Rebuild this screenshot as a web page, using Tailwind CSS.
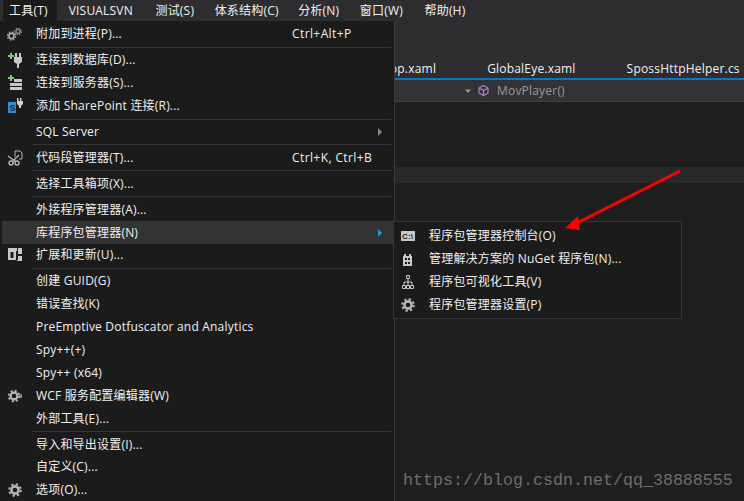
<!DOCTYPE html>
<html lang="en">
<head>
  <meta charset="UTF-8">
  <title>Visual Studio - Tools menu</title>
  <script src="https://cdn.jsdelivr.net/npm/@tailwindcss/browser@4"></script>
</head>
<body class="bg-[#1e1e1e]">
<div class="relative w-[744px] h-[501px] overflow-hidden flex flex-col bg-[#1e1e1e] text-[#f1f1f1] text-[12px] tracking-[0.2px] font-['Open_Sans','Noto_Sans_CJK_SC',sans-serif]">

  <!-- Menu bar -->
  <div class="h-[78px] shrink-0 bg-[#2d2d30]">
    <nav class="h-[21px] flex items-center pl-[9px] gap-[20.5px]">
      <span>工具(T)</span>
      <span class="ml-[0.5px]">VISUALSVN</span>
      <span class="ml-[2px]">测试(S)</span>
      <span>体系结构(C)</span>
      <span class="ml-[-1px]">分析(N)</span>
      <span>窗口(W)</span>
      <span class="ml-[1px]">帮助(H)</span>
    </nav>
    <!-- Tabs -->
    <div class="h-[18px] mt-[39px] pl-[382px] flex items-center whitespace-nowrap text-[#f1f1f1]">
      <span>App.xaml</span>
      <span class="ml-[51px]">GlobalEye.xaml</span>
      <span class="ml-[51px]">SpossHttpHelper.cs</span>
    </div>
  </div>
  <div class="h-[2px] shrink-0 bg-[#007acc]"></div>

  <!-- Navigation bar -->
  <div class="h-[22px] shrink-0 flex items-center bg-[#333337] border-b border-[#3f3f46] pl-[464px] text-[#999999]">
    <svg class="w-[8px] h-[8px]" viewBox="0 0 8 8"><path d="M1 2.500h6L4 6z" fill="#999"/></svg>
    <div class="w-px h-full bg-[#2d2d30] ml-[3px]"></div>
    <svg class="w-[13px] h-[13px] ml-[1px]" viewBox="0 0 13 13" fill="none" stroke="#b180d7" stroke-width="1.1"><path d="M6.500 1.500l4.500 2.500v5l-4.500 2.500L2 9V4zM2 4l4.500 2.500L11 4M6.500 6.500v5"/></svg>
    <span class="ml-[7px]">MovPlayer()</span>
  </div>

  <!-- Editor -->
  <div class="flex-1 pt-[65px]">
    <div class="h-[16px] bg-[#282828]"></div>
  </div>

  <!-- Active menu title -->
  <div class="absolute left-[3px] top-0 w-[54px] h-[21px] bg-[#1b1b1c] pl-[6px] flex items-center">工具(T)</div>

  <!-- Tools menu -->
  <div class="absolute left-0 top-[21px] w-[395px] h-[480px] bg-[#1b1b1c] border-r border-[#3a3a3e] pt-[2px]">
    <div class="flex items-center h-[22.9px]">
      <svg class="w-[36px] h-[16px] shrink-0" viewBox="0 0 36 16" fill="none" stroke="#a9a9a9"><g transform="translate(11.500,10)"><circle r="2.600" stroke-width="1.600"/><circle r="4" stroke-width="1.400" stroke-dasharray="1.570"/></g><g transform="translate(18,5.500)"><circle r="2" stroke-width="1.200"/><circle r="3.300" stroke-width="1.100" stroke-dasharray="1.300"/></g></svg>
      <span class="flex-1">附加到进程(P)...</span><span class="w-[102px] tracking-[0.4px]">Ctrl+Alt+P</span>
    </div>
    <div class="h-[3px] flex items-center pl-[32px] pr-[3px]"><div class="h-px w-full bg-[#333337]"></div></div>
    <div class="flex items-center h-[22.9px]">
      <svg class="w-[36px] h-[18px] shrink-0" viewBox="0 0 36 18"><path d="M8 4h2V2h2v2h2v2h-2v2h-2V6H8z" fill="#7fc77f"/><path d="M15 2h2v4h2V2h2v4h1v5l-3 2v4h-2v-4l-3-2V6h1z" fill="#c8c8c8"/></svg>
      <span>连接到数据库(D)...</span>
    </div>
    <div class="flex items-center h-[22.9px]">
      <svg class="w-[36px] h-[18px] shrink-0" viewBox="0 0 36 18"><path d="M8 3h2V1h2v2h2v2h-2v2h-2V5H8z" fill="#7fc77f"/><path d="M14 5h8v3h-8zM10 9h12v3H10zM10 13h12v3H10z" fill="#c8c8c8"/></svg>
      <span>连接到服务器(S)...</span>
    </div>
    <div class="flex items-center h-[22.9px]">
      <svg class="w-[36px] h-[18px] shrink-0" viewBox="0 0 36 18"><rect x="8" y="5" width="8" height="11" fill="#2f8fd0"/><text x="9.600" y="14" font-size="9" font-weight="700" fill="#10293d" font-family="Liberation Sans">S</text><path d="M17 1h1.500v3h1.500V1h1.500v3H23v3l-2 2v2h-2V9l-2-2z" fill="#d0d0d0"/></svg>
      <span>添加 SharePoint 连接(R)...</span>
    </div>
    <div class="h-[3px] flex items-center pl-[32px] pr-[3px]"><div class="h-px w-full bg-[#333337]"></div></div>
    <div class="flex items-center h-[22.9px]">
      <span class="w-[36px] shrink-0"></span><span class="flex-1">SQL Server</span>
      <svg class="w-[6px] h-[8px] mr-[11px]" viewBox="0 0 6 8"><path d="M1 0l4 4-4 4z" fill="#8a8a8a"/></svg>
    </div>
    <div class="h-[3px] flex items-center pl-[32px] pr-[3px]"><div class="h-px w-full bg-[#333337]"></div></div>
    <div class="flex items-center h-[22.9px]">
      <svg class="w-[36px] h-[18px] shrink-0" viewBox="0 0 36 18" fill="none" stroke="#b5b5b5"><path d="M15 8V2h5l2 2v6h-3" stroke-width="1"/><circle cx="11" cy="14" r="2" stroke-width="1.400"/><circle cx="17" cy="14" r="2" stroke-width="1.400"/><path d="M12.500 12.500L19 6M15.500 12.500L8 7" stroke-width="1.400"/></svg>
      <span class="flex-1">代码段管理器(T)...</span><span class="w-[102px] tracking-[0.4px]">Ctrl+K, Ctrl+B</span>
    </div>
    <div class="h-[3px] flex items-center pl-[32px] pr-[3px]"><div class="h-px w-full bg-[#333337]"></div></div>
    <div class="flex items-center h-[22.9px]"><span class="w-[36px] shrink-0"></span><span>选择工具箱项(X)...</span></div>
    <div class="h-[3px] flex items-center pl-[32px] pr-[3px]"><div class="h-px w-full bg-[#333337]"></div></div>
    <div class="flex items-center h-[22.9px]"><span class="w-[36px] shrink-0"></span><span>外接程序管理器(A)...</span></div>
    <div class="flex items-center h-[22.9px] ml-[2px] bg-[#333334]">
      <span class="w-[34px] shrink-0"></span><span class="flex-1">库程序包管理器(N)</span>
      <svg class="w-[6px] h-[8px] mr-[11px]" viewBox="0 0 6 8"><path d="M1 0l4 4-4 4z" fill="#1c97ea"/></svg>
    </div>
    <div class="flex items-center h-[22.9px]">
      <svg class="w-[36px] h-[16px] shrink-0" viewBox="0 0 36 16"><path d="M8 1h9v3h-1v9h-8zM18 1h4v6h-4zM18 9h4v5h-5v-1h1z" fill="#c8c8c8"/><path d="M10.500 5h3v6h-3z" fill="#1b1b1c"/></svg>
      <span>扩展和更新(U)...</span>
    </div>
    <div class="h-[3px] flex items-center pl-[32px] pr-[3px]"><div class="h-px w-full bg-[#333337]"></div></div>
    <div class="flex items-center h-[22.9px]"><span class="w-[36px] shrink-0"></span><span>创建 GUID(G)</span></div>
    <div class="flex items-center h-[22.9px]"><span class="w-[36px] shrink-0"></span><span>错误查找(K)</span></div>
    <div class="flex items-center h-[22.9px]"><span class="w-[36px] shrink-0"></span><span>PreEmptive Dotfuscator and Analytics</span></div>
    <div class="flex items-center h-[22.9px]"><span class="w-[36px] shrink-0"></span><span>Spy++(+)</span></div>
    <div class="flex items-center h-[22.9px]"><span class="w-[36px] shrink-0"></span><span>Spy++ (x64)</span></div>
    <div class="flex items-center h-[22.9px]">
      <svg class="w-[36px] h-[16px] shrink-0" viewBox="0 0 36 16" fill="none" stroke="#b5b5b5"><g transform="translate(14,8)"><circle r="3.400" stroke-width="2.200"/><circle r="5.300" stroke-width="1.800" stroke-dasharray="2.080"/></g><path d="M19 8h3M21 6v4" stroke-width="1.200"/></svg>
      <span>WCF 服务配置编辑器(W)</span>
    </div>
    <div class="flex items-center h-[22.9px]"><span class="w-[36px] shrink-0"></span><span>外部工具(E)...</span></div>
    <div class="h-[3px] flex items-center pl-[32px] pr-[3px]"><div class="h-px w-full bg-[#333337]"></div></div>
    <div class="flex items-center h-[22.9px]"><span class="w-[36px] shrink-0"></span><span>导入和导出设置(I)...</span></div>
    <div class="flex items-center h-[22.9px]"><span class="w-[36px] shrink-0"></span><span>自定义(C)...</span></div>
    <div class="flex items-center h-[22.9px]">
      <svg class="w-[36px] h-[16px] shrink-0" viewBox="0 0 36 16" fill="none" stroke="#b5b5b5"><g transform="translate(15,8)"><circle r="3.600" stroke-width="2.600"/><circle r="5.800" stroke-width="2" stroke-dasharray="2.280"/></g></svg>
      <span>选项(O)...</span>
    </div>
  </div>

  <!-- Package manager submenu -->
  <div class="absolute left-[393px] top-[221px] w-[289px] h-[98px] bg-[#1b1b1c] border border-[#333337] pt-[2px]">
    <div class="flex items-center h-[23px]">
      <svg class="w-[35px] h-[14px] shrink-0" viewBox="0 0 35 14"><rect x="7" y="2" width="14" height="10" fill="#c8c8c8"/><text x="8" y="10" font-size="8" font-weight="700" fill="#1b1b1c" font-family="Liberation Sans">C:\</text></svg>
      <span>程序包管理器控制台(O)</span>
    </div>
    <div class="flex items-center h-[23px]">
      <svg class="w-[35px] h-[16px] shrink-0" viewBox="0 0 35 16"><path d="M10 3h2v2h3V3h2v2h1v10H9V5h1z" fill="#c8c8c8"/><path d="M11 7h2v2h-2zM14 7h2v2h-2zM11 11h2v2h-2zM14 11h2v2h-2z" fill="#1b1b1c"/></svg>
      <span>管理解决方案的 NuGet 程序包(N)...</span>
    </div>
    <div class="flex items-center h-[23px]">
      <svg class="w-[35px] h-[16px] shrink-0" viewBox="0 0 35 16" fill="none" stroke="#c8c8c8"><path d="M12.500 1.500h3v3h-3zM8.500 11.500h3v3h-3zM12.500 11.500h3v3h-3zM16.500 11.500h3v3h-3zM14 4.500v7M10 11.500V8h8v3.500"/></svg>
      <span>程序包可视化工具(V)</span>
    </div>
    <div class="flex items-center h-[23px]">
      <svg class="w-[35px] h-[16px] shrink-0" viewBox="0 0 35 16" fill="none" stroke="#b5b5b5"><g transform="translate(14,8)"><circle r="3.600" stroke-width="2.600"/><circle r="5.800" stroke-width="2" stroke-dasharray="2.280"/></g></svg>
      <span>程序包管理器设置(P)</span>
    </div>
  </div>

  <!-- Red annotation arrow -->
  <svg class="absolute left-[560px] top-[165px] w-[124px] h-[70px]" viewBox="0 0 124 70"><path d="M120 6L17 58" stroke="#ff0000" stroke-width="3" fill="none"/><path d="M5 63L18 51l2 14z" fill="#ff0000"/></svg>

  <!-- Watermark -->
  <div class="absolute left-[403px] top-[471px] font-['Liberation_Mono',monospace] tracking-normal text-[16.67px] leading-[20px] text-[#6e6e6a] whitespace-nowrap">https://blog.csdn.net/qq_38888555</div>
</div>
</body>
</html>
